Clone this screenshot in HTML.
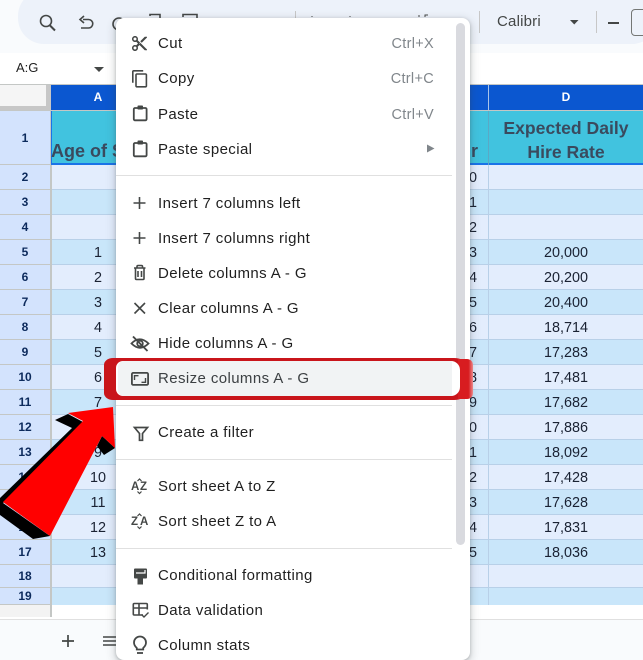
<!DOCTYPE html>
<html><head><meta charset="utf-8"><style>
html,body{margin:0;padding:0;background:#fff}
#p{position:relative;width:643px;height:660px;overflow:hidden;background:#fff;font-family:"Liberation Sans",sans-serif}
#p div{position:absolute}
.r{left:0;width:643px;box-sizing:border-box;border-bottom:1px solid #b8d0e8}
.a{background:#e3edfd}.b{background:#c9e6fa}
.h{left:0;top:0;bottom:-1px;width:50px;background:#d3e3fd;border-right:2px solid #c4c7c5;border-bottom:1px solid #c4c7c5;box-sizing:content-box;text-align:center;font-weight:bold;font-size:12px;color:#0c2a5c;display:flex;align-items:center;justify-content:center}
.l{left:488px;top:0;bottom:0;width:1px;background:#b8d0e8}
.n{bottom:1px;font-size:14.4px;line-height:20px;color:#1a2233;text-align:center}
.ca{left:51px;width:94px}.cc{left:440px;width:37px;text-align:right}.cd{left:489px;width:154px}
.m{left:158px;margin-top:1px;font-size:15px;letter-spacing:.4px;color:#1f1f1f;line-height:20px;white-space:nowrap}
.s{right:209px;margin-top:1px;font-size:14.5px;letter-spacing:.3px;color:#80868b;line-height:20px}
.sp{left:116px;width:336px;height:1px;background:#e0e0e0}
</style></head><body><div id="p">

<div style="left:0;top:0;width:643px;height:53px;background:#f9fbfd"></div>
<div style="left:18px;top:-10px;width:640px;height:54px;background:#edf2fa;border-radius:26px"></div>
<div style="left:295px;top:11px;width:1px;height:22px;background:#c7c7c7"></div>
<div style="left:479px;top:11px;width:1px;height:22px;background:#c7c7c7"></div>
<div style="left:596px;top:11px;width:1px;height:22px;background:#c7c7c7"></div>
<div style="left:497px;top:13px;font-size:15px;line-height:18px;color:#444746;letter-spacing:.2px">Calibri</div>
<div style="left:631px;top:9px;width:30px;height:25px;border:1px solid #747775;border-radius:4px"></div>
<div style="left:608px;top:22px;width:11px;height:2px;background:#444746"></div>

<div style="left:16px;top:60px;font-size:13px;line-height:16px;color:#1f1f1f">A:G</div>

<!-- header row -->
<div style="left:0;top:84px;width:643px;height:1px;background:#c4c7c5"></div>
<div style="left:0;top:85px;width:51px;height:26px;background:#c7c7c7"></div>
<div style="left:0;top:85px;width:46px;height:21px;background:#f5f5f5"></div>
<div style="left:51px;top:85px;width:592px;height:25px;background:#0b57d0"></div>
<div style="left:488px;top:85px;width:1px;height:25px;background:#a9c4ea"></div>
<div style="left:51px;top:85px;width:94px;height:25px;line-height:25px;text-align:center;color:#fff;font-weight:bold;font-size:12px">A</div>
<div style="left:489px;top:85px;width:154px;height:25px;line-height:25px;text-align:center;color:#fff;font-weight:bold;font-size:12px">D</div>
<div style="left:0;top:110px;width:643px;height:1px;background:#c4c7c5"></div>

<!-- row 1 -->
<div style="left:0;top:111px;width:643px;height:54px;background:#41c3df;overflow:hidden">
  <div class="h" style="bottom:0">1</div>
  <div style="left:51px;top:0;width:592px;height:52px;border-left:1px solid #1a73e8;border-bottom:2px solid #1a73e8"></div>
  <div style="left:488px;top:0;width:1px;height:54px;background:#5aa9c6"></div>
  <div style="left:51px;top:28px;font-size:18px;font-weight:bold;line-height:24px;color:#3a4a5e;white-space:nowrap">Age of S</div>
  <div style="left:460px;top:28px;width:18px;text-align:right;font-size:18px;font-weight:bold;line-height:24px;color:#3a4a5e">r</div>
  <div style="left:489px;top:5px;width:154px;text-align:center;font-size:17.600px;font-weight:bold;line-height:24px;color:#3a4a5e;white-space:nowrap">Expected Daily<br>Hire Rate</div>
</div>

<div class="r a" style="top:165px;height:25px"><div class="h">2</div><div class="l"></div><div class="n cc">0</div></div>
<div class="r b" style="top:190px;height:25px"><div class="h">3</div><div class="l"></div><div class="n cc">1</div></div>
<div class="r a" style="top:215px;height:25px"><div class="h">4</div><div class="l"></div><div class="n cc">2</div></div>
<div class="r b" style="top:240px;height:25px"><div class="h">5</div><div class="l"></div><div class="n ca">1</div><div class="n cc">3</div><div class="n cd">20,000</div></div>
<div class="r a" style="top:265px;height:25px"><div class="h">6</div><div class="l"></div><div class="n ca">2</div><div class="n cc">4</div><div class="n cd">20,200</div></div>
<div class="r b" style="top:290px;height:25px"><div class="h">7</div><div class="l"></div><div class="n ca">3</div><div class="n cc">5</div><div class="n cd">20,400</div></div>
<div class="r a" style="top:315px;height:25px"><div class="h">8</div><div class="l"></div><div class="n ca">4</div><div class="n cc">6</div><div class="n cd">18,714</div></div>
<div class="r b" style="top:340px;height:25px"><div class="h">9</div><div class="l"></div><div class="n ca">5</div><div class="n cc">7</div><div class="n cd">17,283</div></div>
<div class="r a" style="top:365px;height:25px"><div class="h">10</div><div class="l"></div><div class="n ca">6</div><div class="n cc">8</div><div class="n cd">17,481</div></div>
<div class="r b" style="top:390px;height:25px"><div class="h">11</div><div class="l"></div><div class="n ca">7</div><div class="n cc">9</div><div class="n cd">17,682</div></div>
<div class="r a" style="top:415px;height:25px"><div class="h">12</div><div class="l"></div><div class="n ca">8</div><div class="n cc">0</div><div class="n cd">17,886</div></div>
<div class="r b" style="top:440px;height:25px"><div class="h">13</div><div class="l"></div><div class="n ca">9</div><div class="n cc">1</div><div class="n cd">18,092</div></div>
<div class="r a" style="top:465px;height:25px"><div class="h">14</div><div class="l"></div><div class="n ca">10</div><div class="n cc">2</div><div class="n cd">17,428</div></div>
<div class="r b" style="top:490px;height:25px"><div class="h">15</div><div class="l"></div><div class="n ca">11</div><div class="n cc">3</div><div class="n cd">17,628</div></div>
<div class="r a" style="top:515px;height:25px"><div class="h">16</div><div class="l"></div><div class="n ca">12</div><div class="n cc">4</div><div class="n cd">17,831</div></div>
<div class="r b" style="top:540px;height:25px"><div class="h">17</div><div class="l"></div><div class="n ca">13</div><div class="n cc">5</div><div class="n cd">18,036</div></div>
<div class="r a" style="top:565px;height:23px"><div class="h">18</div><div class="l"></div></div>
<div class="r b" style="top:588px;height:17px;border-bottom:0"><div class="h" style="bottom:0">19</div><div class="l"></div></div>

<div style="left:0;top:605px;width:50px;height:12px;background:#f3f3f3"></div>
<div style="left:50px;top:605px;width:2px;height:12px;background:#c4c7c5"></div>
<div style="left:0;top:619px;width:643px;height:41px;background:#f9fbfd;border-top:1px solid #e0e0e0"></div>

<!-- underlying toolbar / misc icons -->
<svg style="position:absolute;left:0;top:0" width="643" height="660" fill="none" stroke="#444746" stroke-width="1.6">
  <circle cx="46" cy="21" r="5.5"/><path d="M50 25.500 55 30.500" stroke-width="2"/>
  <path d="M83 19.500h5.500a4 4 0 0 1 0 8.500H81M84 16l-4 3.500 4 3.500"/>
  <circle cx="119" cy="24" r="6"/>
  <path d="M150 16v-1.500h10V18M183 17v-2.500h14V18"/>
  <path d="M570 20h8.500l-4.250 4.500z" fill="#444746" stroke="none"/>
  <path d="M94 67h10l-5 5z" fill="#444746" stroke="none"/>
  <path d="M62 641h12M68 635v12" stroke-width="1.700"/>
  <path d="M103 637h14M103 641h14M103 645h14" stroke-width="1.500"/>
  <path d="M312 17v-1M350 17v-1" stroke-width="1"/>
  <path d="M425 17v-2h3M419 17v-2" stroke-width="1"/>
</svg>

<!-- menu -->
<div style="left:116px;top:18px;width:354px;height:642px;background:#fff;border-radius:8px;box-shadow:0 1px 3px rgba(60,64,67,.3),0 3px 8px 3px rgba(60,64,67,.15)"></div>
<div style="left:456px;top:23px;width:9px;height:522px;background:#d9dadf;border-radius:5px"></div>

<div class="sp" style="top:175px"></div>
<div class="sp" style="top:405px"></div>
<div class="sp" style="top:459px"></div>
<div class="sp" style="top:548px"></div>

<!-- red highlight -->
<div style="left:104px;top:358px;width:362px;height:42px;background:#c9151b;border-radius:9px 12px 12px 9px / 7px"></div>
<div style="left:458px;top:359px;width:15px;height:40px;background:linear-gradient(90deg,#d81c20 0,#d81c20 70%,#ea8a8c 100%);border-radius:0 6px 6px 0"></div>
<div style="left:116px;top:361px;width:344px;height:35px;background:#fff;border-radius:7px 9px 9px 7px"></div>
<div style="left:118px;top:361px;width:334px;height:35px;background:#f1f3f4;border-radius:6px 0 0 6px"></div>

<div class="m" style="top:33px">Cut</div><div class="s" style="top:33px">Ctrl+X</div>
<div class="m" style="top:68px">Copy</div><div class="s" style="top:68px">Ctrl+C</div>
<div class="m" style="top:104px">Paste</div><div class="s" style="top:104px">Ctrl+V</div>
<div class="m" style="top:139px">Paste special</div>
<div class="m" style="top:193px">Insert 7 columns left</div>
<div class="m" style="top:228px">Insert 7 columns right</div>
<div class="m" style="top:263px">Delete columns A - G</div>
<div class="m" style="top:298px">Clear columns A - G</div>
<div class="m" style="top:333px">Hide columns A - G</div>
<div class="m" style="top:368px;color:#3c4043">Resize columns A - G</div>
<div class="m" style="top:422px">Create a filter</div>
<div class="m" style="top:476px">Sort sheet A to Z</div>
<div class="m" style="top:511px">Sort sheet Z to A</div>
<div class="m" style="top:565px">Conditional formatting</div>
<div class="m" style="top:600px">Data validation</div>
<div class="m" style="top:635px">Column stats</div>

<!-- menu icons -->
<svg style="position:absolute;left:0;top:0" width="643" height="660" fill="none" stroke="#444746" stroke-width="1.800">
  <path d="M427 144.500l7.500 4-7.500 4z" fill="#80868b" stroke="none"/>
  <!-- cut -->
  <g transform="translate(130.500 34.500) scale(.75)"><path fill="#444746" stroke="none" d="M9.640 7.640c.23-.5.36-1.050.36-1.640 0-2.210-1.790-4-4-4S2 3.790 2 6s1.790 4 4 4c.59 0 1.140-.13 1.640-.36L10 12l-2.360 2.360C7.140 14.130 6.590 14 6 14c-2.210 0-4 1.790-4 4s1.790 4 4 4 4-1.790 4-4c0-.59-.13-1.140-.36-1.640L12 14l7 7h3v-1L9.640 7.640zM6 8c-1.100 0-2-.89-2-2s.9-2 2-2 2 .89 2 2-.9 2-2 2zm0 12c-1.100 0-2-.89-2-2s.9-2 2-2 2 .89 2 2-.9 2-2 2zm6-7.500c-.28 0-.5-.22-.5-.5s.22-.5.5-.5.5.22.5.5-.22.5-.5.5zM19 3l-6 6 2 2 7-7V3h-3z"/></g>
  <!-- copy -->
  <g transform="translate(130.400 69.200) scale(.8)"><path fill="#444746" stroke="none" d="M16 1H4c-1.100 0-2 .9-2 2v14h2V3h12V1zm3 4H8c-1.100 0-2 .9-2 2v14c0 1.100.9 2 2 2h11c1.100 0 2-.9 2-2V7c0-1.100-.9-2-2-2zm0 16H8V7h11v14z"/></g>
  <!-- paste -->
  <rect x="133.800" y="108" width="12.800" height="12.300" rx="1.200"/>
  <rect x="137.500" y="105.500" width="5.500" height="4" rx=".8" fill="#444746" stroke="none"/>
  <rect x="133.800" y="143" width="12.800" height="13.300" rx="1.200"/>
  <rect x="137.500" y="140.500" width="5.500" height="4" rx=".8" fill="#444746" stroke="none"/>
  <!-- plus -->
  <path d="M133.500 203h12M139.500 197v12M133.500 238h12M139.500 232v12" stroke-width="1.600"/>
  <!-- delete -->
  <path d="M134 268h11.500M137 268v-1.500q0-1 1-1h3.500q1 0 1 1V268M135.500 268v10.500q0 1 1 1h6.500q1 0 1-1V268M138 271v6M141.500 271v6" stroke-width="1.600"/>
  <!-- clear -->
  <path d="M134.500 303l10.500 10.500M145 303l-10.500 10.500" stroke-width="1.600"/>
  <!-- hide -->
  <path d="M131.500 343.500q8-8.500 17 0q-8.500 8.500-17 0z"/><circle cx="140" cy="343.500" r="2.800"/><path d="M133 336.500l14.500 14.500" stroke-width="1.900"/>
  <!-- resize -->
  <rect x="131.900" y="372.900" width="16.200" height="12" rx="1.300"/>
  <path d="M134.500 380v-4.300h4M145.500 378v4.300h-4" stroke-width="1.400"/>
  <!-- filter -->
  <path d="M134.500 427.500h13l-5 6v6.800h-3v-6.800z" stroke-width="1.700"/>
  <!-- sort -->
  <text x="131" y="490" font-family="Liberation Sans,sans-serif" font-size="11.500" font-weight="bold" fill="#444746" stroke="none" letter-spacing=".3">A</text>
  <text x="140" y="490" font-family="Liberation Sans,sans-serif" font-size="11.500" font-weight="bold" fill="#444746" stroke="none" letter-spacing=".3">Z</text>
  <path d="M137.500 481l2-2 2 2M137.500 491.500l2 2 2-2" stroke-width="1.200"/>
  <text x="131" y="525" font-family="Liberation Sans,sans-serif" font-size="11.500" font-weight="bold" fill="#444746" stroke="none" letter-spacing=".3">Z</text>
  <text x="140" y="525" font-family="Liberation Sans,sans-serif" font-size="11.500" font-weight="bold" fill="#444746" stroke="none" letter-spacing=".3">A</text>
  <path d="M137.500 516l2-2 2 2M137.500 526.500l2 2 2-2" stroke-width="1.200"/>
  <!-- conditional -->
  <path d="M134 569.500q0-1 1-1h11q1 0 1 1v8q0 1-1 1h-11q-1 0-1-1z" fill="#444746" stroke="none"/>
  <rect x="137.500" y="578" width="5.500" height="6.500" fill="#444746" stroke="none"/>
  <path d="M136 573h9V570" stroke="#fff" stroke-width="1.200"/>
  <!-- validation -->
  <path d="M143 615h-8.700q-1 0-1-1v-9.500q0-1 1-1h12q1 0 1 1v5M133.500 608h14M139 604v11" stroke-width="1.600"/>
  <path d="M141.500 614.500l2.500 2.500 4.500-4.500" stroke-width="1.400"/>
  <!-- bulb -->
  <path d="M136.800 648q-2.800-2.500-2.800-5.500a6 6 0 0 1 12 0q0 3-2.800 5.500v1.500h-6.400z"/><path d="M137 653h6" stroke-width="1.800"/>
</svg>

<!-- arrow -->
<svg style="position:absolute;left:0;top:0" width="643" height="660">
  <path fill="#000" d="M55 420 68 414 83 422 40 480 3 503 50 536 33 539 0 515 0 498 72 428z"/>
  <path fill="#000" d="M102 436 115 448 104 455 97 446z"/>
  <path fill="#f00" d="M68 413 113 407 115 448 102 436 50 536 3 502 83 421z"/>
</svg>
</div></body></html>
